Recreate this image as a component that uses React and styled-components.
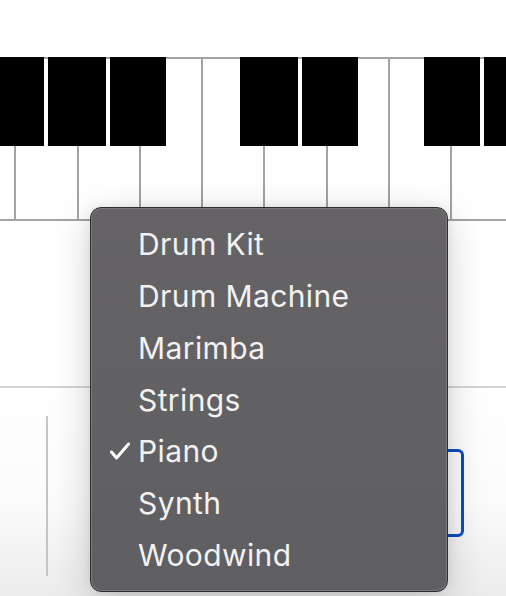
import React from "react";
import styled, { createGlobalStyle } from "styled-components";

const Global = createGlobalStyle`
  html, body { margin: 0; padding: 0; background: #ffffff; }
  body { width: 506px; height: 596px; overflow: hidden; font-family: Inter, "Noto Sans", sans-serif; }
  #root { width: 506px; height: 596px; }
`;

const Page = styled.div`
  position: relative;
  width: 506px;
  height: 596px;
  display: flex;
  flex-direction: column;
  background: #ffffff;
  overflow: hidden;
`;

const TopSpace = styled.div`
  height: 57px;
  flex: none;
`;

const Keyboard = styled.div`
  position: relative;
  flex: none;
  height: 160px;
  border-top: 2px solid #a3a3a3;
  border-bottom: 2px solid #a3a3a3;
  display: flex;
  margin-left: -46px;
`;

const WhiteKey = styled.div`
  flex: none;
  width: 60.3px;
  height: 100%;
  border-right: 2px solid #a3a3a3;
  background: #ffffff;
`;

const BlackKey = styled.div`
  position: absolute;
  top: -2px;
  height: 89px;
  background: #000000;
`;

const Middle = styled.div`
  flex: none;
  height: 165px;
  border-bottom: 2px solid #d4d4d4;
`;

const Bottom = styled.div`
  flex: 1;
  display: flex;
  align-items: flex-start;
  background: linear-gradient(to bottom, #ffffff 0%, #fbfbfb 55%, #ececec 100%);
`;

const Divider = styled.div`
  margin: 28px 0 0 46px;
  width: 2px;
  height: 160px;
  background: #c4c4c4;
`;

const BlueBox = styled.div`
  margin: 61px 0 0 254px;
  width: 156px;
  height: 82px;
  border: 3px solid #0a4dc2;
  border-radius: 6px;
`;

const Menu = styled.div`
  position: absolute;
  left: 90px;
  top: 207px;
  width: 358px;
  height: 385px;
  box-sizing: border-box;
  padding: 10px 0;
  background: linear-gradient(to bottom, #656365, #5f5e62);
  border: 1px solid #2e2e30;
  border-radius: 11px;
  box-shadow: inset 0 0 0 1px #7b797b, 0 10px 40px rgba(0, 0, 0, 0.18), 0 0 12px rgba(0, 0, 0, 0.08);
  display: flex;
  flex-direction: column;
`;

const Item = styled.div`
  position: relative;
  height: 52px;
  display: flex;
  align-items: center;
  padding-left: 47px;
  color: #f2f2f2;
  font-size: 30px;
  font-weight: 400;
  letter-spacing: 0.4px;
  white-space: nowrap;
`;

const Check = styled.svg`
  position: absolute;
  left: 19px;
  top: 17px;
  width: 20px;
  height: 18px;
`;

const blackKeys = [
  [0, 44],
  [48, 106],
  [110, 166],
  [240, 298],
  [302, 358],
  [424, 480],
  [484, 540],
];

const items = ["Drum Kit", "Drum Machine", "Marimba", "Strings", "Piano", "Synth", "Woodwind"];

export default function App() {
  return (
    <Page>
      <Global />
      <TopSpace />
      <Keyboard>
        {Array.from({ length: 10 }).map((_, i) => (
          <WhiteKey key={i} />
        ))}
        {blackKeys.map(([a, b], i) => (
          <BlackKey key={i} style={{ left: a + 46, width: b - a }} />
        ))}
      </Keyboard>
      <Middle />
      <Bottom>
        <Divider />
        <BlueBox />
      </Bottom>
      <Menu>
        {items.map((t) => (
          <Item key={t}>
            {t === "Piano" && (
              <Check viewBox="0 0 20 18">
                <path d="M1.5 10 L6.5 16 L18.5 2" fill="none" stroke="#ffffff" strokeWidth="3" strokeLinecap="round" strokeLinejoin="round" />
              </Check>
            )}
            {t}
          </Item>
        ))}
      </Menu>
    </Page>
  );
}
